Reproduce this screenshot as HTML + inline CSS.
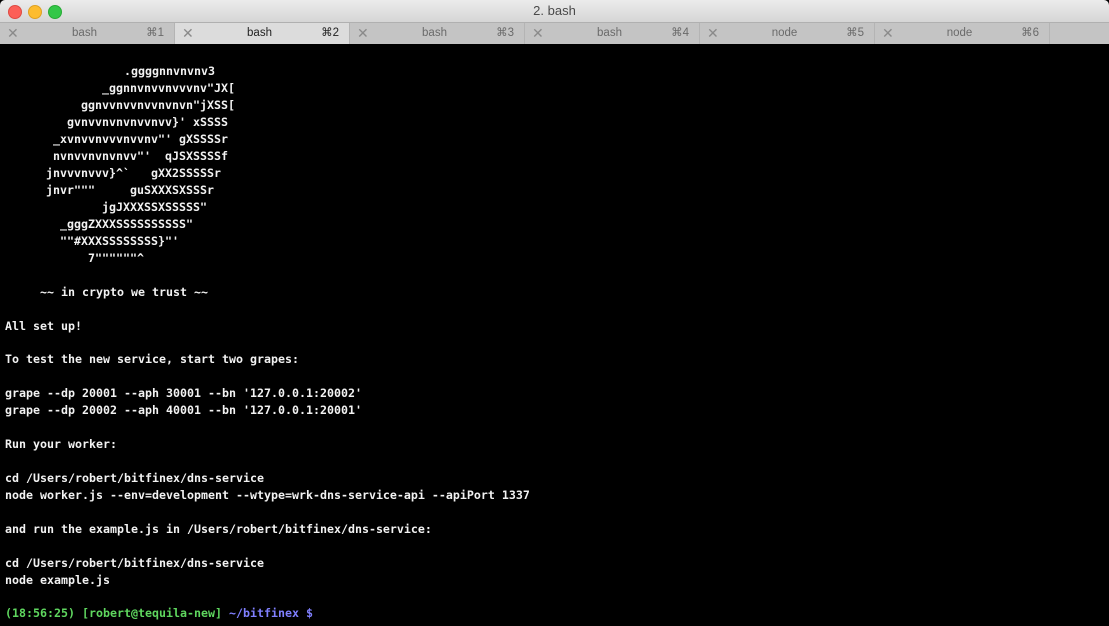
<!DOCTYPE html>
<html><head><meta charset="utf-8"><style>
html,body{margin:0;padding:0;width:1109px;height:626px;overflow:hidden;background:#000;}
.title{position:absolute;left:0;top:0;width:1109px;height:22px;background:linear-gradient(#ececec,#d6d6d6);border-radius:5px 5px 0 0;font:13px "Liberation Sans",sans-serif;color:#4a4a4a;text-align:center;line-height:22px;}
.dot{position:absolute;top:5px;width:12px;height:12px;border-radius:50%;}
.tabs{position:absolute;left:0;top:22px;width:1109px;height:22px;background:#c4c4c4;border-top:1px solid #b0b0b0;box-sizing:border-box;}
.tab{position:absolute;top:0;height:21px;width:175px;border-right:1px solid #b4b4b4;box-sizing:border-box;font:11.5px "Liberation Sans",sans-serif;color:#6a6a6a;line-height:21px;}
.tab.act{background:#dcdcdc;color:#222;}
.tab .x{position:absolute;left:7px;top:0;font-size:14px;color:#8a8a8a;}
.tab .n{position:absolute;left:-3px;width:175px;text-align:center;}
.tab .k{position:absolute;right:10px;}
.term{position:absolute;left:5px;top:46.5px;margin:0;font:bold 11.63px "DejaVu Sans Mono","Liberation Mono",monospace;line-height:16.93px;color:#f2f2f2;white-space:pre;}
.a{position:absolute;font:bold 11.63px "DejaVu Sans Mono","Liberation Mono",monospace;line-height:16.93px;color:#f2f2f2;white-space:pre;}
.g{color:#5fd75f}.b{color:#8080ff}
</style></head><body>
<div class="title">2. bash
<div class="dot" style="left:8px;background:#fc5f57;border:0.5px solid #de4a42"></div>
<div class="dot" style="left:28px;background:#fdbc2e;border:0.5px solid #dea123"></div>
<div class="dot" style="left:48px;background:#33c748;border:0.5px solid #27aa35"></div>
</div>
<div class="tabs">
<div class="tab" style="left:0"><span class="x">✕</span><span class="n">bash</span><span class="k">⌘1</span></div>
<div class="tab act" style="left:175px"><span class="x">✕</span><span class="n">bash</span><span class="k">⌘2</span></div>
<div class="tab" style="left:350px"><span class="x">✕</span><span class="n">bash</span><span class="k">⌘3</span></div>
<div class="tab" style="left:525px"><span class="x">✕</span><span class="n">bash</span><span class="k">⌘4</span></div>
<div class="tab" style="left:700px"><span class="x">✕</span><span class="n">node</span><span class="k">⌘5</span></div>
<div class="tab" style="left:875px"><span class="x">✕</span><span class="n">node</span><span class="k">⌘6</span></div>
</div>
<div class="a" style="left:124px;top:63.4px">.ggggnnvnvnv3</div>
<div class="a" style="left:102px;top:80.4px">_ggnnvnvvnvvvnv"JX[</div>
<div class="a" style="left:81px;top:97.3px">ggnvvnvvnvvnvnvn"jXSS[</div>
<div class="a" style="left:67px;top:114.3px">gvnvvnvnvnvvnvv}' xSSSS</div>
<div class="a" style="left:53px;top:131.2px">_xvnvvnvvvnvvnv"' gXSSSSr</div>
<div class="a" style="left:53px;top:148.1px">nvnvvnvnvnvv"'  qJSXSSSSf</div>
<div class="a" style="left:46px;top:165px">jnvvvnvvv}^`   gXX2SSSSSr</div>
<div class="a" style="left:46px;top:182px">jnvr"""     guSXXXSXSSSr</div>
<div class="a" style="left:102px;top:198.9px">jgJXXXSSXSSSSS"</div>
<div class="a" style="left:60px;top:215.8px">_gggZXXXSSSSSSSSSS"</div>
<div class="a" style="left:60px;top:232.8px">""#XXXSSSSSSSS}"'</div>
<div class="a" style="left:88px;top:249.7px">7""""""^</div>
<pre class="term">














     ~~ in crypto we trust ~~

All set up!

To test the new service, start two grapes:

grape --dp 20001 --aph 30001 --bn '127.0.0.1:20002'
grape --dp 20002 --aph 40001 --bn '127.0.0.1:20001'

Run your worker:

cd /Users/robert/bitfinex/dns-service
node worker.js --env=development --wtype=wrk-dns-service-api --apiPort 1337

and run the example.js in /Users/robert/bitfinex/dns-service:

cd /Users/robert/bitfinex/dns-service
node example.js

<span class="g">(18:56:25) [robert@tequila-new]</span> <span class="b">~/bitfinex $</span></pre>
</body></html>
